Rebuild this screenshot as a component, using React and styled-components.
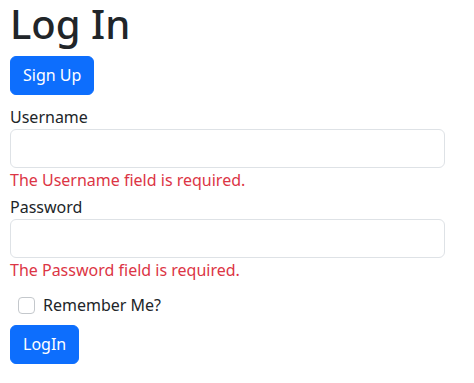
import React from 'react'
import styled, { createGlobalStyle } from 'styled-components'

const GlobalStyle = createGlobalStyle`
  body {
    margin: 0;
    background: #fff;
    color: #212529;
    font-family: "Noto Sans", "Liberation Sans", sans-serif;
    font-size: 16px;
    line-height: 1.5;
  }
`

const Page = styled.div`
  padding: 0 29px 0 10px;
`

const Title = styled.h1`
  margin: 0 0 8px;
  font-size: 40px;
  font-weight: 500;
  line-height: 48px;
`

const Button = styled.button`
  display: inline-block;
  font: inherit;
  color: #fff;
  background: #0d6efd;
  border: 1px solid #0d6efd;
  border-radius: 6px;
  padding: 6px 12px;
  line-height: 25px;
  cursor: pointer;
`

const Form = styled.form`
  margin-top: 10px;
`

const Group = styled.div`
  display: flex;
  flex-direction: column;
  margin-bottom: 3px;
`

const Label = styled.label`
  display: block;
  line-height: 24px;
`

const Input = styled.input`
  display: block;
  width: 100%;
  box-sizing: border-box;
  height: 39px;
  padding: 6px 12px;
  font: inherit;
  border: 1px solid #dee2e6;
  border-radius: 6px;
  outline: none;
`

const Feedback = styled.div`
  font-size: 16px;
  line-height: 24px;
  color: #dc3545;
`

const CheckRow = styled.label`
  display: flex;
  align-items: center;
  gap: 8px;
  padding-left: 8px;
  margin: 11px 0 8px;
  line-height: 24px;
`

const Check = styled.input`
  appearance: none;
  width: 17px;
  height: 17px;
  margin: 0;
  border: 1px solid #c4c8cc;
  border-radius: 4px;
  background: #fff;
`

export default function App() {
  return (
    <Page>
      <GlobalStyle />
      <Title>Log In</Title>
      <Button type="button">Sign Up</Button>
      <Form onSubmit={e => e.preventDefault()}>
        <Group>
          <Label htmlFor="username">Username</Label>
          <Input id="username" type="text" />
          <Feedback>The Username field is required.</Feedback>
        </Group>
        <Group>
          <Label htmlFor="password">Password</Label>
          <Input id="password" type="password" />
          <Feedback>The Password field is required.</Feedback>
        </Group>
        <CheckRow>
          <Check type="checkbox" />
          Remember Me?
        </CheckRow>
        <Button type="submit">LogIn</Button>
      </Form>
    </Page>
  )
}
